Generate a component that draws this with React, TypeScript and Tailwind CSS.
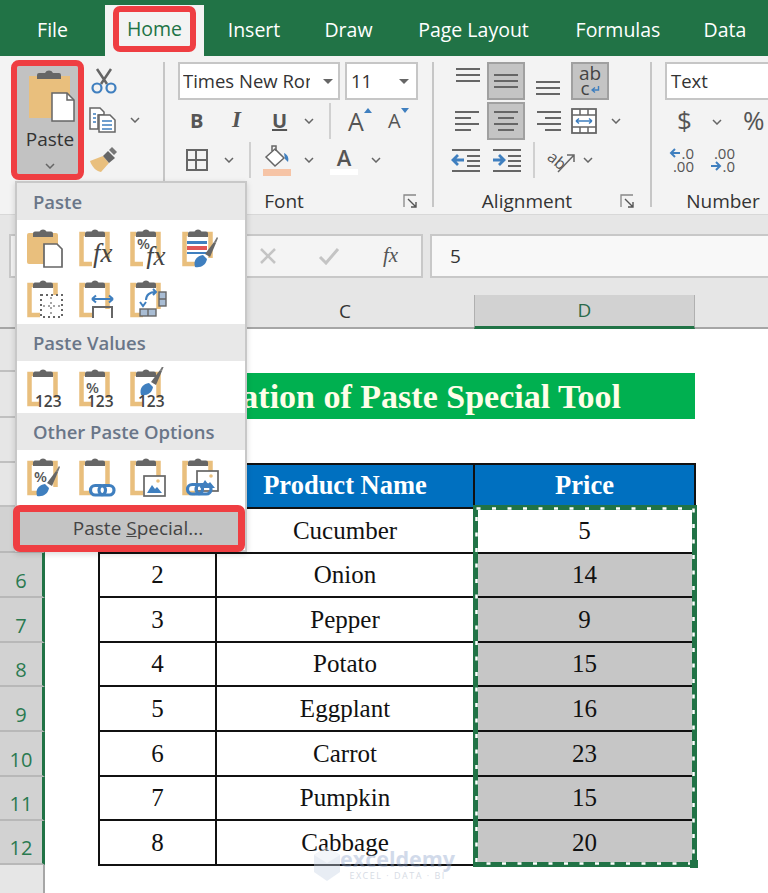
import React from 'react';

const Chevron = ({ className = '' }: { className?: string }) => (
  <svg width="10" height="6" viewBox="0 0 10 6" className={className}>
    <path d="M1 1l4 4 4-4" fill="none" stroke="#666" strokeWidth="1.5" />
  </svg>
);

const Launcher = () => (
  <svg width="15" height="15" viewBox="0 0 15 15">
    <path d="M1 13V1h12" fill="none" stroke="#888" strokeWidth="1.3" />
    <path d="M5 5l8 8M13 8v5H8" fill="none" stroke="#555" strokeWidth="1.4" />
  </svg>
);

// clipboard used by all the paste options, children draw the bit on top
const Board = ({ solid, children }: { solid?: boolean; children?: React.ReactNode }) => (
  <svg width="38" height="42" viewBox="0 0 38 42">
    {solid ? (
      <rect x="1" y="6" width="31" height="31" rx="2" fill="#e9bf7d" />
    ) : (
      <path d="M7 7H3.5v30H14M26 7h3.500v24" fill="none" stroke="#e9bf7d" strokeWidth="4.500" />
    )}
    <path d="M7 10V6.500a2 2 0 0 1 2-2h4.500a4 4 0 0 1 7 0H25a2 2 0 0 1 2 2V10z" fill="#666" />
    {children}
  </svg>
);

const Sheet = ({ x, y }: { x: number; y: number }) => (
  <path d={`M${x} ${y}h13l5 5v18h-18z`} fill="#fff" stroke="#666" strokeWidth="1.700" />
);

const Fx = ({ x = 15, y = 35 }: { x?: number; y?: number }) => (
  <text x={x} y={y} fontFamily="Liberation Serif" fontStyle="italic" fontSize="27" fill="#444">
    fx
  </text>
);

const Num = ({ y = 40 }: { y?: number }) => (
  <text x="9" y={y} fontFamily="Open Sans" fontWeight="600" fontSize="15.500" fill="#444">
    123
  </text>
);

const Pct = ({ x = 9, y = 24 }: { x?: number; y?: number }) => (
  <text x={x} y={y} fontFamily="Open Sans" fontWeight="600" fontSize="15" fill="#555">
    %
  </text>
);

const Brush = ({ x = 0, y = 0 }: { x?: number; y?: number }) => (
  <g transform={`translate(${x} ${y})`}>
    <path d="M14 40c-2-7 2-11 8-12l4 4c-1 6-6 9-12 8z" fill="#3f7fbf" />
    <path d="M24 27l9-12 2 1-6 14z" fill="#666" />
    <path d="M33 15l3-5 1 1-2 5z" fill="#777" />
  </g>
);

const Link = ({ x = 11, y = 28 }: { x?: number; y?: number }) => (
  <g transform={`translate(${x} ${y})`} fill="none" stroke="#3f7fbf" strokeWidth="3.200">
    <rect x="1.500" y="1.500" width="15" height="9.500" rx="4.700" />
    <rect x="10" y="1.500" width="15" height="9.500" rx="4.700" />
  </g>
);

const Picture = ({ x = 14, y = 19 }: { x?: number; y?: number }) => (
  <g transform={`translate(${x} ${y})`}>
    <rect x="1" y="1" width="21" height="20" fill="#fff" stroke="#666" strokeWidth="1.700" />
    <path d="M4 18l5-8 3 4 2-2 5 6z" fill="#3f7fbf" />
    <circle cx="15" cy="6" r="1.800" fill="#e9bf7d" />
  </g>
);

const pasteRowOne = [
  <Board solid key="a"><Sheet x={18} y={17} /></Board>,
  <Board key="b"><Fx /></Board>,
  <Board key="c"><Pct x={8} y={22} /><Fx x={17} y={38} /></Board>,
  <Board key="d">
    <rect x="6" y="14" width="20" height="3" fill="#3f7fbf" />
    <rect x="6" y="19" width="20" height="4" fill="#e05555" />
    <rect x="6" y="25" width="20" height="2" fill="#3f7fbf" />
    <Brush />
  </Board>,
];

const pasteRowTwo = [
  <Board key="e">
    <rect x="15" y="17" width="21" height="22" fill="#fff" stroke="#666" strokeWidth="2" strokeDasharray="2 3" />
    <path d="M25 19v18M17 28h17" stroke="#888" strokeWidth="1.500" strokeDasharray="2 3" />
  </Board>,
  <Board key="f">
    <path d="M14 21h21M14 21l4-3.500M14 21l4 3.500M35 21l-4-3.500M35 21l-4 3.500" fill="none" stroke="#3f7fbf" strokeWidth="2" />
    <path d="M15 40V29h19v11" fill="none" stroke="#666" strokeWidth="2" />
  </Board>,
  <Board key="g">
    <path d="M17 22c0-5 4-8 9-8M24 11l3 3-3 3M17 24l-3 4-3-4" fill="none" stroke="#3f7fbf" strokeWidth="2" />
    <rect x="30" y="14" width="7" height="14" fill="#a9bdd4" stroke="#666" strokeWidth="1.400" />
    <rect x="11" y="31" width="16" height="7" fill="#a9bdd4" stroke="#666" strokeWidth="1.400" />
    <path d="M30 21h7M19 31v7" stroke="#666" strokeWidth="1.400" />
  </Board>,
];

const valueIcons = [
  <Board key="a"><Num /></Board>,
  <Board key="b"><Pct x={8} y={26} /><Num /></Board>,
  <Board key="c">
    <g transform="translate(-2 -12)"><Brush /></g>
    <Num />
  </Board>,
];

const otherIcons = [
  <Board key="a"><Pct x={8} y={26} /><Brush x={-3} /></Board>,
  <Board key="b"><Link /></Board>,
  <Board key="c"><Picture /></Board>,
  <Board key="d"><Picture x={15} y={14} /><Link x={5} y={27} /></Board>,
];

const MenuHead = ({ children }: { children: React.ReactNode }) => (
  <div className="h-[37px] bg-[#e8e8e8] pl-[16px] text-[18.500px] font-semibold leading-[37px] text-[#6a7688]">
    {children}
  </div>
);

const IconRow = ({ icons, className = '' }: { icons: React.ReactNode[]; className?: string }) => (
  <div className={`flex pl-[9px] ${className}`}>
    {icons.map((icon, i) => (
      <div key={i} className="flex w-[51.500px] justify-start">
        {icon}
      </div>
    ))}
  </div>
);

const PasteMenu = () => (
  <div className="absolute left-[15px] top-[181px] h-[371px] w-[232px] border-2 border-[#c8c8c8] bg-white shadow-[0_2px_6px_rgba(0,0,0,0.15)]">
    <MenuHead>Paste</MenuHead>
    <IconRow icons={pasteRowOne} className="mt-[7px]" />
    <IconRow icons={pasteRowTwo} className="mt-[9px] mb-[4px]" />
    <MenuHead>Paste Values</MenuHead>
    <IconRow icons={valueIcons} className="mt-[6px] mb-[4px]" />
    <MenuHead>Other Paste Options</MenuHead>
    <IconRow icons={otherIcons} className="mt-[6px]" />
  </div>
);

const tabs = [
  { label: 'File', w: 'w-[105px]' },
  { label: 'Home', w: 'w-[99px]', active: true },
  { label: 'Insert', w: 'w-[100px]' },
  { label: 'Draw', w: 'w-[89px]' },
  { label: 'Page Layout', w: 'w-[161px]' },
  { label: 'Formulas', w: 'w-[128px]' },
  { label: 'Data', w: 'w-[86px]' },
];

const TabBar = () => (
  <div className="flex h-[56px] bg-[#217346] text-[19.500px]">
    {tabs.map((t) =>
      t.active ? (
        <div key={t.label} className={`${t.w} mt-[5px] flex items-start justify-center bg-[#f3f3f3] pt-[1px]`}>
          <div className="flex h-[46px] w-[83px] items-center justify-center rounded-[7px] border-[6px] border-[#ef3e42] text-[#217346]">
            {t.label}
          </div>
        </div>
      ) : (
        <div key={t.label} className={`${t.w} flex items-center justify-center pt-[4px] text-white`}>
          {t.label}
        </div>
      )
    )}
  </div>
);

const Sep = () => <div className="h-[145px] w-[2px] shrink-0 bg-[#c6c6c6]" />;

const Lines = ({ widths, active }: { widths: number[]; active?: boolean }) => (
  <div className={`flex flex-col items-center gap-[4px] ${active ? 'h-[38px] w-[38px] justify-center border-[2px] border-[#a0a0a0] bg-[#c4c4c4]' : 'w-[38px]'}`}>
    {widths.map((w, i) => (
      <div key={i} className="h-[2px] bg-[#666]" style={{ width: w }} />
    ))}
  </div>
);

const AlignLines = ({ rows, justify }: { rows: number[]; justify: string }) => (
  <div className={`flex w-[26px] flex-col gap-[4px] ${justify}`}>
    {rows.map((w, i) => (
      <div key={i} className="h-[2px] bg-[#666]" style={{ width: w }} />
    ))}
  </div>
);

const Indent = ({ flip }: { flip?: boolean }) => (
  <svg width="30" height="24" viewBox="0 0 30 24">
    <path d="M1 2h28M16 8h13M16 13h13M16 18h13M1 23h28" stroke="#666" strokeWidth="1.800" />
    {flip ? (
      <path d="M1 12h10M7 7l5 5-5 5" fill="none" stroke="#3f7fbf" strokeWidth="2.800" />
    ) : (
      <path d="M13 12H3M7 7l-5 5 5 5" fill="none" stroke="#3f7fbf" strokeWidth="2.800" />
    )}
  </svg>
);

const Ribbon = () => (
  <div className="flex h-[159px] border-b border-[#d8d8d8] bg-[#f3f3f3] pt-[6px] text-[#333]">
    {/* Clipboard */}
    <div className="flex w-[163px] shrink-0 pl-[17px]">
      <div className="relative z-10 mt-[4px] flex h-[108px] w-[61px] flex-col items-center rounded-[2px] bg-[#c2c2c2] outline-[6px] outline-[#ef3e42]">
        <svg width="50" height="54" viewBox="0 0 50 54" className="mt-[2px] ml-[6px]">
          <rect x="3" y="8" width="41" height="42" fill="#e9bf7d" />
          <path d="M11 11V7a2 2 0 0 1 2-2h6a4.500 4.500 0 0 1 8 0h6a2 2 0 0 1 2 2v4z" fill="#666" />
          <path d="M26 25h15l7 7v21H26z" fill="#fff" stroke="#666" strokeWidth="1.500" />
          <path d="M41 25v7h7" fill="none" stroke="#666" strokeWidth="1.500" />
        </svg>
        <span className="ml-[5px] mt-[5px] text-[19px] leading-[24px]">Paste</span>
        <Chevron className="ml-[4px] mt-[12px]" />
      </div>
      <div className="ml-[9px] flex flex-col">
        <div className="flex h-[38px] items-center">
          <svg width="28" height="28" viewBox="0 0 28 28" className="ml-[3px]">
            <path d="M7 2l10 15M21 2L11 17" stroke="#666" strokeWidth="2.500" />
            <circle cx="7" cy="21" r="4.500" fill="none" stroke="#3f7fbf" strokeWidth="2.200" />
            <circle cx="21" cy="21" r="4.500" fill="none" stroke="#3f7fbf" strokeWidth="2.200" />
          </svg>
        </div>
        <div className="flex h-[40px] items-center">
          <svg width="28" height="28" viewBox="0 0 28 28" className="ml-[2px]">
            <path d="M1 2h10l4 4v3H9v14H1z" fill="#fff" stroke="#666" strokeWidth="1.500" />
            <path d="M10 9h11l5 5v12H10z" fill="#fff" stroke="#666" strokeWidth="1.500" />
            <path d="M4 8h3M4 12h3M4 16h3M13 15h10M13 19h10M13 23h10" stroke="#3f7fbf" strokeWidth="1.600" />
          </svg>
          <Chevron className="ml-[13px]" />
        </div>
        <div className="flex h-[38px] items-center">
          <svg width="30" height="28" viewBox="0 0 30 28" className="ml-[2px]">
            <path d="M1 16l13-5 6 7-8 9c-5-1-9-5-11-11z" fill="#e9bf7d" />
            <path d="M14 11l5-5 7 7-6 5z" fill="#666" />
            <path d="M20 5l3-3 5 5-3 3z" fill="#777" />
          </svg>
        </div>
      </div>
    </div>
    <Sep />

    {/* Font */}
    <div className="flex w-[267px] shrink-0 flex-col">
      <div className="flex h-[39px] gap-[5px] pl-[13px]">
        <div className="flex h-[38px] w-[162px] items-center border-2 border-[#c6c6c6] bg-white pl-[3px] text-[18.500px]">
          <span className="w-[127px] overflow-hidden whitespace-nowrap">Times New Roman</span>
          <div className="ml-[13px] h-0 w-0 border-x-[5px] border-t-[5px] border-x-transparent border-t-[#666]" />
        </div>
        <div className="flex h-[38px] w-[73px] items-center border-2 border-[#c6c6c6] bg-white pl-[4px] text-[18.500px]">
          <span className="w-[48px]">11</span>
          <div className="h-0 w-0 border-x-[5px] border-t-[5px] border-x-transparent border-t-[#666]" />
        </div>
      </div>
      <div className="flex h-[39px] items-center pl-[13px] text-[#555]">
        <span className="ml-[12px] w-[42px] text-[20px] font-bold">B</span>
        <span className="w-[40px] font-['Liberation_Serif'] text-[23px] font-bold italic">I</span>
        <span className="w-[32px] text-[20px] font-bold underline">U</span>
        <Chevron />
        <div className="ml-[15px] h-[36px] w-[2px] bg-[#d0d0d0]" />
        <div className="ml-[17px] flex w-[40px] items-start">
          <span className="text-[25px] leading-[26px]">A</span>
          <div className="h-0 w-0 border-x-[4px] border-b-[5px] border-x-transparent border-b-[#3f7fbf]" />
        </div>
        <div className="flex w-[30px] items-start">
          <span className="text-[20px] leading-[26px]">A</span>
          <div className="h-0 w-0 border-x-[4px] border-t-[5px] border-x-transparent border-t-[#3f7fbf]" />
        </div>
      </div>
      <div className="flex h-[39px] items-center pl-[13px]">
        <div className="ml-[8px] grid h-[22px] w-[22px] grid-cols-2 border-2 border-[#666]">
          <div className="border-r-2 border-b-2 border-[#666]" />
          <div className="border-b-2 border-[#666]" />
          <div className="border-r-2 border-[#666]" />
          <div />
        </div>
        <Chevron className="ml-[16px]" />
        <div className="ml-[15px] h-[36px] w-[2px] bg-[#d0d0d0]" />
        <svg width="30" height="32" viewBox="0 0 30 32" className="ml-[11px]">
          <path d="M4 13l9-8 9 9-9 8z" fill="#fff" stroke="#666" strokeWidth="1.500" />
          <path d="M10 7V2h4v5" fill="none" stroke="#666" strokeWidth="1.500" />
          <path d="M22 9c4 2 5 5 4 9l-3-3z" fill="#3f7fbf" />
          <rect x="1" y="25" width="28" height="7" fill="#f6c4a6" />
        </svg>
        <Chevron className="ml-[12px]" />
        <div className="ml-[16px] flex flex-col items-center">
          <span className="text-[22px] font-semibold leading-[24px] text-[#555]">A</span>
          <div className="h-[6px] w-[28px] bg-white" />
        </div>
        <Chevron className="ml-[13px]" />
      </div>
      <div className="mt-[11px] flex h-[22px] items-center">
        <span className="w-[238px] text-center text-[19px] leading-[22px]">Font</span>
        <Launcher />
      </div>
    </div>
    <Sep />

    {/* Alignment */}
    <div className="flex w-[216px] shrink-0 flex-col">
      <div className="flex h-[39px] pl-[15px]">
        <div className="flex w-[38px] flex-col items-center pt-[6px]">
          <AlignLines rows={[24, 24, 24]} justify="items-center" />
        </div>
        <Lines widths={[24, 24, 24]} active />
        <div className="flex w-[46px] flex-col items-center justify-end pb-[6px]">
          <AlignLines rows={[24, 24, 24]} justify="items-center" />
        </div>
        <div className="relative flex h-[38px] w-[38px] flex-col items-center justify-center border-2 border-[#a0a0a0] bg-[#c4c4c4] text-[19px] leading-[15px] text-[#444]">
          <span>ab</span>
          <span className="pr-[10px]">c</span>
          <svg width="9" height="8" viewBox="0 0 9 8" className="absolute bottom-[4px] right-[7px]">
            <path d="M7.500 0v4H1.500M4 1.500L1 4l3 2.500" fill="none" stroke="#3f7fbf" strokeWidth="1.400" />
          </svg>
        </div>
      </div>
      <div className="flex h-[39px] items-center pl-[15px]">
        <div className="flex w-[38px] justify-center">
          <AlignLines rows={[24, 16, 24, 16]} justify="items-start" />
        </div>
        <div className="flex h-[38px] w-[38px] items-center justify-center border-2 border-[#a0a0a0] bg-[#c4c4c4]">
          <AlignLines rows={[24, 16, 24, 16]} justify="items-center" />
        </div>
        <div className="flex w-[46px] justify-center">
          <AlignLines rows={[24, 16, 24, 16]} justify="items-end" />
        </div>
        <svg width="26" height="26" viewBox="0 0 26 26">
          <rect x="1" y="1" width="24" height="24" fill="#fff" stroke="#666" strokeWidth="1.800" />
          <path d="M1 7h24M1 19h24M9 1v6M17 1v6M9 19v6M17 19v6" stroke="#666" strokeWidth="1.500" />
          <path d="M5 13h16M5 13l3-2.500M5 13l3 2.500M21 13l-3-2.500M21 13l-3 2.500" fill="none" stroke="#3f7fbf" strokeWidth="1.500" />
        </svg>
        <Chevron className="ml-[14px]" />
      </div>
      <div className="flex h-[39px] items-center pl-[17px]">
        <Indent />
        <div className="ml-[11px]">
          <Indent flip />
        </div>
        <div className="ml-[11px] h-[36px] w-[2px] bg-[#d0d0d0]" />
        <div className="ml-[12px] flex items-center">
          <svg width="30" height="28" viewBox="0 0 30 28">
            <text x="1" y="20" fontFamily="Open Sans" fontSize="16" fill="#555" transform="rotate(40 10 14)">
              ab
            </text>
            <path d="M11 26L27 9M20 9h7v7" fill="none" stroke="#666" strokeWidth="1.500" />
          </svg>
          <Chevron className="ml-[6px]" />
        </div>
      </div>
      <div className="mt-[11px] flex h-[22px] items-center">
        <span className="w-[186px] text-center text-[19px] leading-[22px]">Alignment</span>
        <Launcher />
      </div>
    </div>
    <Sep />

    {/* Number */}
    <div className="flex min-w-0 flex-1 flex-col overflow-hidden pl-[13px]">
      <div className="h-[39px]">
        <div className="flex h-[38px] w-[140px] items-center border-2 border-[#c6c6c6] bg-white pl-[4px] text-[18.500px]">
          Text
        </div>
      </div>
      <div className="flex h-[39px] items-center text-[#555]">
        <span className="ml-[12px] w-[35px] text-[26px]">$</span>
        <Chevron className="mt-[2px]" />
        <span className="ml-[21px] text-[26px]">%</span>
      </div>
      <div className="flex h-[39px] items-center text-[15px] leading-[13px] text-[#555]">
        <div className="w-[29px] text-right">
          <div className="flex items-center justify-end">
            <svg width="12" height="10" viewBox="0 0 12 10">
              <path d="M11 5H2M6 1L2 5l4 4" fill="none" stroke="#3f7fbf" strokeWidth="2" />
            </svg>
            <span>.0</span>
          </div>
          <div>.00</div>
        </div>
        <div className="w-[41px] text-right">
          <div>.00</div>
          <div className="flex items-center justify-end">
            <svg width="12" height="10" viewBox="0 0 12 10">
              <path d="M1 5h9M6 1l4 4-4 4" fill="none" stroke="#3f7fbf" strokeWidth="2" />
            </svg>
            <span>.0</span>
          </div>
        </div>
      </div>
      <div className="mt-[11px] h-[22px] w-[116px] text-center text-[19px] leading-[22px]">Number</div>
    </div>
  </div>
);

const FormulaBar = () => (
  <div className="flex h-[80px] bg-[#e6e6e6] pl-[9px] pt-[19px]">
    <div className="h-[44px] w-[200px] border-2 border-[#c8c8c8] bg-[#f4f4f4]" />
    <div className="flex h-[44px] w-[214px] items-center border-2 border-l-0 border-[#c8c8c8] bg-[#f4f4f4] text-[#c4c4c4]">
      <svg width="18" height="18" viewBox="0 0 18 18" className="ml-[50px]">
        <path d="M2 2l14 14M16 2L2 16" stroke="#c4c4c4" strokeWidth="2.500" />
      </svg>
      <svg width="22" height="18" viewBox="0 0 22 18" className="ml-[41px]">
        <path d="M2 10l6 6L20 2" fill="none" stroke="#c4c4c4" strokeWidth="3" />
      </svg>
      <span className="ml-[43px] font-['Liberation_Serif'] text-[21px] italic text-[#555]">fx</span>
    </div>
    <div className="ml-[7px] flex h-[44px] flex-1 items-center border-2 border-r-0 border-[#c8c8c8] bg-[#f8f8f8] pl-[18px] text-[19px] text-[#333]">
      5
    </div>
  </div>
);

const ColumnHeaders = () => (
  <div className="flex h-[34px] border-b-2 border-[#a6a6a6] bg-[#e6e6e6] text-[19px] text-[#333]">
    <div className="w-[216px]" />
    <div className="flex w-[258px] items-center justify-center">C</div>
    <div className="-mb-[2px] flex w-[221px] items-center justify-center border-x border-b-[3px] border-x-[#b0b0b0] border-b-[#217346] bg-[#d2d2d2] text-[#2a6a4a]">
      D
    </div>
  </div>
);

const rowHeaders = [
  { n: 1, h: 'h-[43px]' },
  { n: 2, h: 'h-[46px]' },
  { n: 3, h: 'h-[45px]' },
  { n: 4, h: 'h-[44px]' },
  { n: 5, h: 'h-[46px]' },
  { n: 6, h: 'h-[45px]' },
  { n: 7, h: 'h-[45px]' },
  { n: 8, h: 'h-[44px]' },
  { n: 9, h: 'h-[45px]' },
  { n: 10, h: 'h-[45px]' },
  { n: 11, h: 'h-[44px]' },
  { n: 12, h: 'h-[44px]' },
];

const products: [number, string, number][] = [
  [1, 'Cucumber', 5],
  [2, 'Onion', 14],
  [3, 'Pepper', 9],
  [4, 'Potato', 15],
  [5, 'Eggplant', 16],
  [6, 'Carrot', 23],
  [7, 'Pumpkin', 15],
  [8, 'Cabbage', 20],
];

const Selection = () => (
  <div className="absolute left-[473px] top-[505px] h-[362px] w-[224px]">
    <svg width="224" height="362" viewBox="0 0 224 362" fill="none">
      <rect x="2.500" y="2.500" width="219" height="357" stroke="#217346" strokeWidth="5" />
      <rect x="3.500" y="3.500" width="217" height="355" stroke="#fff" strokeWidth="2.500" strokeDasharray="4 11.500" />
    </svg>
    <div className="absolute -bottom-[1px] -right-[1px] h-[8px] w-[8px] bg-[#217346]" />
  </div>
);

const Watermark = () => (
  <div className="absolute left-[313px] top-[846px] flex items-center opacity-40">
    <svg width="28" height="36" viewBox="0 0 28 36">
      <path d="M14 1l13 8v17l-13 9L1 26V9z" fill="#c7d3e6" />
      <path d="M14 1l13 8-13 8L1 9z" fill="#e3e9f3" />
    </svg>
    <div className="-ml-[1px] flex flex-col items-center">
      <span className="text-[21.500px] font-bold leading-[22px] text-[#8fa5cc]">exceldemy</span>
      <span className="text-[9px] leading-[11px] tracking-[1.500px] text-[#9aa8bd]">EXCEL · DATA · BI</span>
    </div>
  </div>
);

const App: React.FC = () => {
  return (
    <div className="relative h-[893px] w-[768px] overflow-hidden bg-white font-['Open_Sans',sans-serif]">
      <TabBar />
      <Ribbon />
      <FormulaBar />
      <ColumnHeaders />

      <div className="flex">
        {/* Row numbers */}
        <div className="w-[45px] shrink-0">
          {rowHeaders.map((r) => (
            <div
              key={r.n}
              className={`${r.h} flex items-end justify-center border-b-2 text-[20px] ${
                r.n >= 5
                  ? 'border-r-[3px] border-b-[#b8b8b8] border-r-[#217346] bg-[#d2d2d2] text-[#2a7a50]'
                  : 'border-r border-b-[#c0c0c0] border-r-[#a6a6a6] bg-[#e6e6e6]'
              }`}
            >
              {r.n >= 6 ? r.n : ''}
            </div>
          ))}
          <div className="h-[40px] border-r-2 border-[#a6a6a6] bg-[#e6e6e6]" />
        </div>

        {/* Cells */}
        <div className="flex-1 pl-[54px] pt-[44px] font-['Liberation_Serif',serif] text-[#111]">
          <div className="flex h-[46px] w-[596px] items-center justify-center whitespace-nowrap bg-[#00b050] pr-[28px] text-[34px] font-bold text-[#fffde8]">
            Application of Paste Special Tool
          </div>
          <table className="-ml-[1px] mt-[44px] w-[596px] table-fixed border-collapse text-center text-[25px]">
            <colgroup>
              <col className="w-[117px]" />
              <col className="w-[258px]" />
              <col className="w-[221px]" />
            </colgroup>
            <thead>
              <tr className="h-[44px] bg-[#0070c0] text-[26.500px] font-bold text-white">
                <th className="border-2 border-[#111]">SL</th>
                <th className="border-2 border-[#111]">Product Name</th>
                <th className="border-2 border-[#111]">Price</th>
              </tr>
            </thead>
            <tbody>
              {products.map(([id, name, price], i) => (
                <tr key={id} className="h-[44.600px]">
                  <td className="border-2 border-[#111] p-0">{id}</td>
                  <td className="border-2 border-[#111] p-0">{name}</td>
                  <td className={`border-2 border-[#111] p-0 ${i === 0 ? '' : 'bg-[#c6c6c6]'}`}>{price}</td>
                </tr>
              ))}
            </tbody>
          </table>
        </div>
      </div>

      <Selection />
      <Watermark />
      <PasteMenu />

      {/* Paste Special button */}
      <div className="absolute left-[13px] top-[505px] flex h-[47px] w-[232px] items-center justify-center rounded-[7px] border-[7px] border-[#ef3e42] bg-[#c4c4c4] pl-[18px] text-[19px] text-[#444]">
        <span>
          Paste <span className="underline">S</span>pecial...
        </span>
      </div>
    </div>
  );
};

export default App;
